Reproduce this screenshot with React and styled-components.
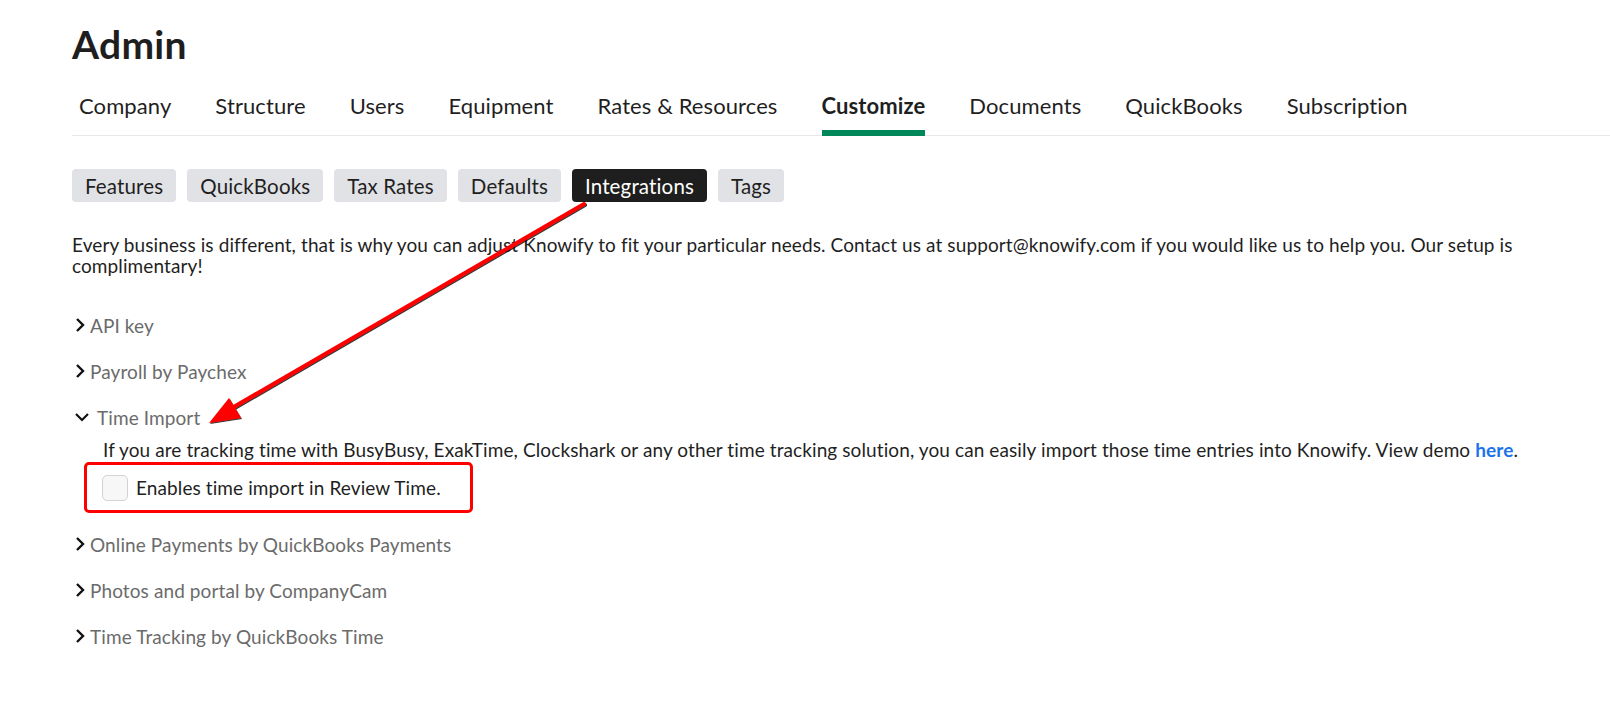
import React, { useState } from 'react'
import styled, { createGlobalStyle } from 'styled-components'

const GlobalStyle = createGlobalStyle`
  html, body {
    margin: 0;
    padding: 0;
    background: #fff;
  }
  body {
    font-family: Lato, "Open Sans", Arial, sans-serif;
    color: #1f1f1f;
  }
`

const Page = styled.div`
  position: relative;
  width: 1610px;
  height: 716px;
  overflow: hidden;
  box-sizing: border-box;
  padding: 22px 70px 0 72px;
`

const Title = styled.h1`
  margin: 0;
  font-size: 39px;
  font-weight: 700;
  line-height: 44px;
  letter-spacing: 0.3px;
  color: #1e1e1e;
`

const TopNav = styled.nav`
  display: flex;
  gap: 44px;
  margin: 20px -70px 0 0;
  padding-left: 7px;
  border-bottom: 1px solid #e8e8ea;
`

const TopTab = styled.a`
  display: block;
  padding: 6px 0 10px;
  font-size: 22px;
  line-height: 28px;
  letter-spacing: 0.1px;
  color: #1f1f1f;
  font-weight: ${(p) => (p.active ? 700 : 400)};
  border-bottom: 6px solid ${(p) => (p.active ? '#00875a' : 'transparent')};
  border-radius: 4px 4px 0 0;
  margin-bottom: -1px;
  cursor: pointer;
`

const SubTabs = styled.div`
  display: flex;
  gap: 11px;
  margin-top: 33px;
`

const SubTab = styled.button`
  height: 33px;
  padding: 0 13px;
  border: none;
  border-radius: 4px;
  font-family: inherit;
  font-size: 20.5px;
  letter-spacing: 0.15px;
  background: ${(p) => (p.active ? '#1e1e1e' : '#e1e2e6')};
  color: ${(p) => (p.active ? '#fff' : '#1f1f1f')};
  cursor: pointer;
`

const Intro = styled.p`
  margin: 32px 0 0;
  font-size: 19px;
  line-height: 21px;
  letter-spacing: 0.1px;
  color: #1f1f1f;
`

const Sections = styled.div`
  display: flex;
  flex-direction: column;
  margin-top: 26px;
`

const Section = styled.div`
  display: flex;
  flex-direction: column;
`

const SectionHead = styled.div`
  display: flex;
  align-items: center;
  height: 46px;
  gap: ${(p) => (p.open ? '7px' : '4px')};
  padding-left: 2px;
  font-size: 19px;
  letter-spacing: 0.1px;
  color: #6b6b6b;
  cursor: pointer;
`

const Chevron = styled.svg`
  width: ${(p) => (p.open ? '16px' : '12px')};
  height: 16px;
  flex: none;
`

const Body = styled.div`
  display: flex;
  flex-direction: column;
  margin-top: -2px;
  padding-bottom: 8px;
`

const BodyText = styled.p`
  margin: 0 0 0 31px;
  font-size: 19px;
  line-height: 24px;
  letter-spacing: 0.1px;
  color: #1f1f1f;
`

const Link = styled.a`
  color: #1a73e8;
  font-weight: 700;
  text-decoration: none;
`

const OptionBox = styled.label`
  display: flex;
  align-items: center;
  gap: 8px;
  align-self: flex-start;
  width: 368px;
  height: 45px;
  margin: 0 0 0 12px;
  padding-left: 15px;
  border: 3px solid #f00;
  border-radius: 5px;
  box-sizing: content-box;
  font-size: 19px;
  letter-spacing: 0.1px;
  color: #1f1f1f;
  cursor: pointer;
`

const Box = styled.span`
  width: 24px;
  height: 24px;
  border: 1px solid #d3d3d6;
  border-radius: 5px;
  background: ${(p) => (p.checked ? '#00875a' : '#f7f7f8')};
  flex: none;
`

const Overlay = styled.svg`
  position: absolute;
  left: 0;
  top: 0;
  pointer-events: none;
`

const topTabs = [
  'Company',
  'Structure',
  'Users',
  'Equipment',
  'Rates & Resources',
  'Customize',
  'Documents',
  'QuickBooks',
  'Subscription',
]

const subTabs = ['Features', 'QuickBooks', 'Tax Rates', 'Defaults', 'Integrations', 'Tags']

const sections = [
  'API key',
  'Payroll by Paychex',
  'Time Import',
  'Online Payments by QuickBooks Payments',
  'Photos and portal by CompanyCam',
  'Time Tracking by QuickBooks Time',
]

function ChevronIcon({ open }) {
  return open ? (
    <Chevron open viewBox="0 0 16 16">
      <path d="M2 5l6 6 6-6" fill="none" stroke="#111" strokeWidth="2.2" />
    </Chevron>
  ) : (
    <Chevron viewBox="0 0 12 16">
      <path d="M3 2l6 6-6 6" fill="none" stroke="#111" strokeWidth="2.4" />
    </Chevron>
  )
}

export default function App() {
  const [open, setOpen] = useState('Time Import')
  const [checked, setChecked] = useState(false)

  return (
    <Page>
      <GlobalStyle />
      <Title>Admin</Title>
      <TopNav>
        {topTabs.map((t) => (
          <TopTab key={t} active={t === 'Customize'}>
            {t}
          </TopTab>
        ))}
      </TopNav>

      <SubTabs>
        {subTabs.map((t) => (
          <SubTab key={t} active={t === 'Integrations'}>
            {t}
          </SubTab>
        ))}
      </SubTabs>

      <Intro>
        Every business is different, that is why you can adjust Knowify to fit your particular needs. Contact us at
        support@knowify.com if you would like us to help you. Our setup is complimentary!
      </Intro>

      <Sections>
        {sections.map((s) => (
          <Section key={s}>
            <SectionHead open={open === s} onClick={() => setOpen(open === s ? '' : s)}>
              <ChevronIcon open={open === s} />
              {s}
            </SectionHead>
            {open === s && s === 'Time Import' && (
              <Body>
                <BodyText>
                  If you are tracking time with BusyBusy, ExakTime, Clockshark or any other time tracking solution, you
                  can easily import those time entries into Knowify. View demo <Link>here</Link>.
                </BodyText>
                <OptionBox onClick={() => setChecked(!checked)}>
                  <Box checked={checked} />
                  Enables time import in Review Time.
                </OptionBox>
              </Body>
            )}
          </Section>
        ))}
      </Sections>

      <Overlay width="1610" height="716">
        <defs>
          <filter id="shade" x="-10%" y="-10%" width="120%" height="120%">
            <feDropShadow dx="1" dy="1" stdDeviation="0.6" floodColor="#000" floodOpacity="0.8" />
          </filter>
        </defs>
        <g filter="url(#shade)">
          <line x1="584" y1="204" x2="232" y2="408" stroke="#f00" strokeWidth="4" strokeLinecap="round" />
          <polygon points="209,423 241,418 229,398" fill="#f00" />
        </g>
      </Overlay>
    </Page>
  )
}
